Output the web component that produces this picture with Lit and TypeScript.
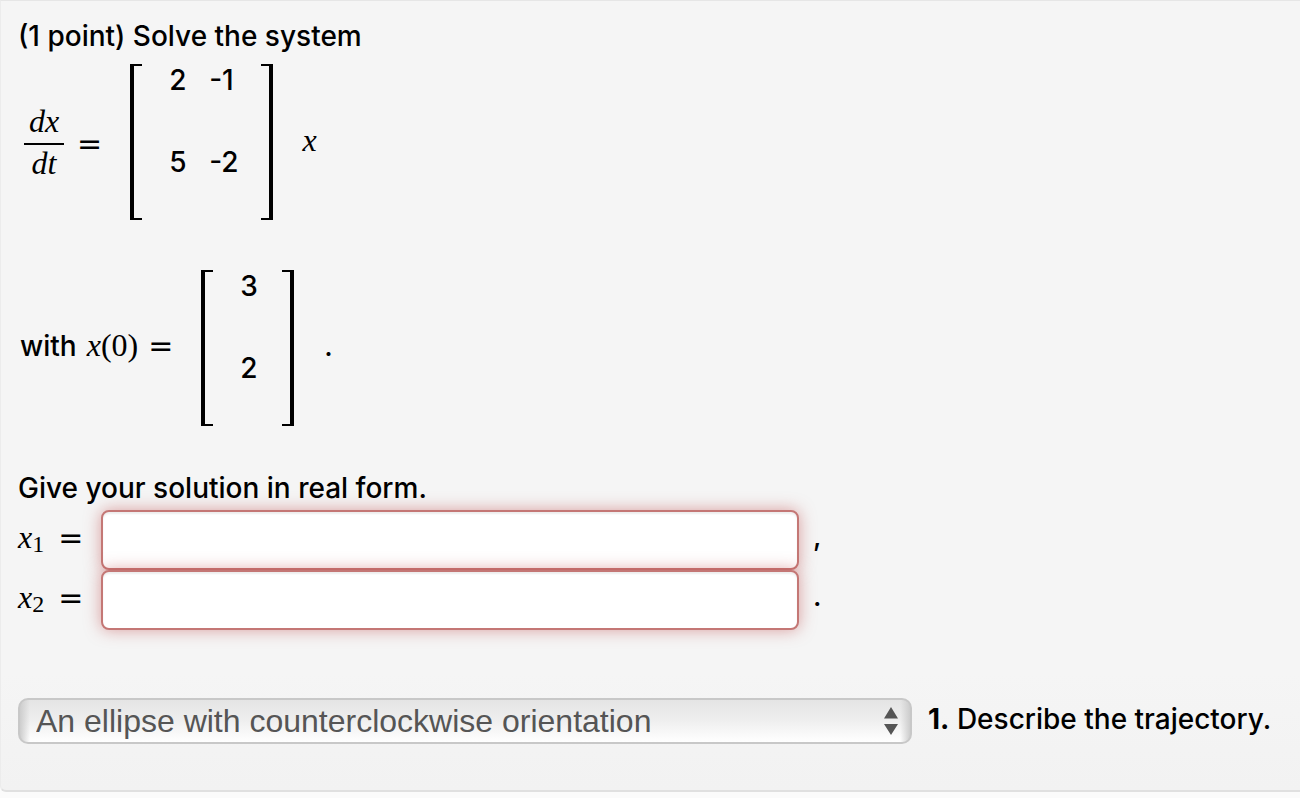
import { LitElement, html, css } from "lit";
import { customElement, property, state } from "lit/decorators.js";

@customElement("bracket-matrix")
class BracketMatrix extends LitElement {
  @property({ attribute: false }) rows: string[][] = [];

  static styles = css`
    :host {
      display: flex;
      flex: none;
    }
    .bracket {
      box-sizing: border-box;
      width: 12px;
      border: solid #000;
    }
    .left {
      border-width: 2px 0 2px 4px;
    }
    .right {
      border-width: 2px 4px 2px 0;
    }
    .cells {
      border-spacing: 0;
      margin: 0 22px 42px 24px;
    }
    td {
      padding: 0 0 50px 3px;
      line-height: 32px;
      min-width: 20px;
    }
    td + td {
      min-width: 26px;
      padding-left: 20px;
    }
    tr:last-child td {
      padding-bottom: 0;
    }
  `;

  render() {
    return html`
      <span class="bracket left"></span>
      <table class="cells">
        ${this.rows.map((r) => html`<tr>${r.map((c) => html`<td>${c}</td>`)}</tr>`)}
      </table>
      <span class="bracket right"></span>
    `;
  }
}

@customElement("app-root")
class AppRoot extends LitElement {
  @state() private trajectory = "An ellipse with counterclockwise orientation";

  private options = [
    "An ellipse with counterclockwise orientation",
    "An ellipse with clockwise orientation",
  ];

  static styles = css`
    :host {
      display: block;
      min-height: 100vh;
      background: #fbfbfb;
      color: #000;
      font: 500 28px/32px Inter, "Liberation Sans", sans-serif;
    }
    .panel {
      padding: 19px 17px 46px;
      border: solid #e0e0e0;
      border-width: 1px 0 2px 1px;
      border-top-color: #e6e6e6;
      border-left-color: #ececec;
      border-radius: 0 0 0 6px;
      background: linear-gradient(#f5f5f5 85%, #f2f2f2);
    }
    p {
      margin: 0;
    }
    .equation {
      display: flex;
      align-items: center;
      margin-top: 12px;
    }
    .initial {
      margin-top: 50px;
    }
    .math {
      font: 32px/36px "Liberation Serif", serif;
    }
    .var {
      font-style: italic;
    }
    .fraction {
      display: flex;
      flex-direction: column;
      text-align: center;
      width: 40px;
      margin: 0 13px 0 6px;
    }
    .numerator {
      padding-bottom: 4px;
      border-bottom: 2px solid #000;
    }
    .equals {
      font: 30px/36px "DejaVu Sans", sans-serif;
    }
    .gap {
      margin-right: 28px;
    }
    .relation {
      padding-top: 4px;
    }
    .after {
      margin-left: 30px;
      padding-bottom: 4px;
    }
    .lead {
      display: flex;
      align-items: baseline;
      gap: 10px;
      padding: 0 0 6px 2px;
    }
    .prompt {
      margin-top: 46px;
    }
    .answers {
      margin-top: 6px;
    }
    .answer {
      display: flex;
      align-items: center;
    }
    .name {
      display: flex;
      align-items: baseline;
      flex: none;
      width: 83px;
      padding-bottom: 6px;
      white-space: nowrap;
    }
    .sub {
      font-size: 24px;
      line-height: 0;
      position: relative;
      top: 4px;
    }
    .answer .equals {
      margin-left: 14px;
    }
    .field {
      box-sizing: border-box;
      flex: 0 1 698px;
      min-width: 0;
      height: 60px;
      padding: 8px 12px;
      border: 2px solid #c47775;
      border-radius: 8px;
      background: #fff;
      box-shadow: inset 0 2px 2px rgba(0, 0, 0, 0.07), 0 0 16px rgba(190, 70, 70, 0.5);
      font: inherit;
      outline: none;
    }
    .punct {
      padding: 0 0 8px 14px;
    }
    .question {
      display: flex;
      align-items: center;
      gap: 16px;
      margin-top: 68px;
    }
    .picker {
      position: relative;
      display: flex;
      flex: 0 1 894px;
      min-width: 0;
    }
    .choice {
      box-sizing: border-box;
      width: 100%;
      height: 46px;
      padding: 0 48px 0 16px;
      border: 2px solid #c8c8c8;
      border-radius: 10px;
      appearance: none;
      background: linear-gradient(90deg, #cdcdcd, transparent 10px, transparent calc(100% - 10px), #cdcdcd),
        linear-gradient(#e4e4e4, #efefef 50%, #fff);
      color: #555;
      font: 32px/40px "Liberation Sans", sans-serif;
    }
    .arrows {
      position: absolute;
      right: 14px;
      top: 9px;
      width: 14px;
      height: 28px;
      fill: #555;
      pointer-events: none;
    }
    .describe {
      white-space: nowrap;
      padding-bottom: 4px;
    }
    b {
      font-weight: 700;
    }
  `;

  private pick(e: Event) {
    this.trajectory = (e.target as HTMLSelectElement).value;
  }

  private answer(n: number, mark: string) {
    return html`
      <div class="answer">
        <label class="name math" for="x${n}"
          ><span class="var">x</span><span class="sub">${n}</span
          ><span class="equals">=</span></label
        >
        <input class="field" id="x${n}" type="text" autocomplete="off" />
        <span class="punct">${mark}</span>
      </div>
    `;
  }

  render() {
    return html`
      <main class="panel">
        <p>(1 point) Solve the system</p>
        <div class="equation">
          <span class="fraction math var">
            <span class="numerator">dx</span>
            <span>dt</span>
          </span>
          <span class="equals relation gap">=</span>
          <bracket-matrix .rows=${[["2", "-1"], ["5", "-2"]]}></bracket-matrix>
          <span class="math var after">x</span>
        </div>
        <div class="equation initial">
          <span class="lead gap">
            <span>with</span>
            <span class="math"><span class="var">x</span>(0)</span>
            <span class="equals">=</span>
          </span>
          <bracket-matrix .rows=${[["3"], ["2"]]}></bracket-matrix>
          <span class="after">.</span>
        </div>
        <p class="prompt">Give your solution in real form.</p>
        <div class="answers">${this.answer(1, ",")} ${this.answer(2, ".")}</div>
        <div class="question">
          <div class="picker">
            <select class="choice" id="trajectory" @change=${this.pick}>
              ${this.options.map(
                (o) => html`<option ?selected=${o === this.trajectory}>${o}</option>`
              )}
            </select>
            <svg class="arrows" viewBox="0 0 14 28" aria-hidden="true">
              <path d="M7 0 14 11.500H0ZM0 17H14L7 28Z" />
            </svg>
          </div>
          <label class="describe" for="trajectory"><b>1.</b> Describe the trajectory.</label>
        </div>
      </main>
    `;
  }
}
